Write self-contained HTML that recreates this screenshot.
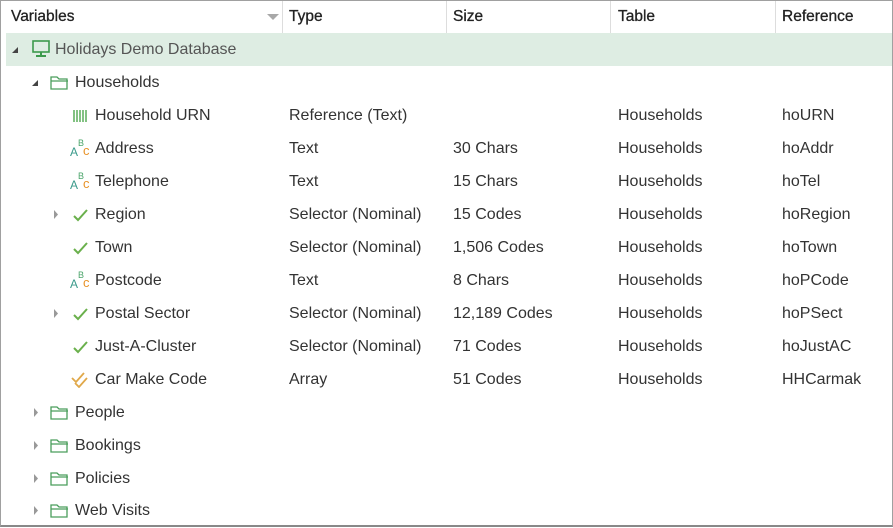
<!DOCTYPE html>
<html><head><style>
body{margin:0;width:893px;height:526px;overflow:hidden;background:#fff;font-family:"Liberation Sans",sans-serif;}
.wrap{position:absolute;left:0;top:0;width:891px;height:524px;border:1px solid #a0a0a0;border-bottom:2px solid #888;}
.hdr{position:absolute;top:0;height:32px;font-size:15.5px;color:#222;line-height:31px;-webkit-text-stroke:0.3px #222;}
.sep{position:absolute;top:0;height:32px;width:1px;background:#ddd;}
.row{position:absolute;left:0;width:891px;height:33px;font-size:16px;color:#333;line-height:34px;}
.row span{position:absolute;white-space:nowrap;}
.hl{background:#deede3;left:5px;width:886px;}
.ic{position:absolute;}
</style></head><body><div class="wrap">
<div class="hdr" style="left:10px">Variables</div>
<div style="position:absolute;left:266px;top:13px;border-left:6px solid transparent;border-right:6px solid transparent;border-top:6px solid #a8a8a8"></div>
<div class="sep" style="left:281px"></div><div class="hdr" style="left:288px">Type</div>
<div class="sep" style="left:445px"></div><div class="hdr" style="left:452px">Size</div>
<div class="sep" style="left:609px"></div><div class="hdr" style="left:617px">Table</div>
<div class="sep" style="left:774px"></div><div class="hdr" style="left:781px">Reference</div>

<div class="row hl" style="top:32px;"></div>
<div class="row" style="top:32px;">
<svg class="ic" style="left:11px;top:13px" width="8" height="8"><path d="M6 1V7H0Z" fill="#444"/></svg>
<svg class="ic" style="left:30px;top:7px" width="20" height="18"><rect x="2" y="1" width="16" height="11" fill="none" stroke="#3c9a4c" stroke-width="1.6"/><path d="M10 12v3M5 16h10" stroke="#3c9a4c" stroke-width="2"/></svg>
<span style="left:54px;color:#555">Holidays Demo Database</span></div>

<div class="row" style="top:65px">
<svg class="ic" style="left:31px;top:13px" width="8" height="8"><path d="M6 1V7H0Z" fill="#444"/></svg>
<svg class="ic" style="left:49px;top:9px" width="20" height="15"><path d="M1 2h6l2 2h8v10H1Z M1 6h17" fill="none" stroke="#4a9e5c" stroke-width="1.3"/></svg>
<span style="left:74px">Households</span></div>

<div class="row" style="top:98px">
<svg class="ic" style="left:72px;top:11px" width="16" height="12"><path d="M1 0v12M4 0v12M7 0v12M10 0v12M13 0v12" stroke="#5aae5a" stroke-width="1.5"/></svg>
<span style="left:94px">Household URN</span><span style="left:288px">Reference (Text)</span><span style="left:617px">Households</span><span style="left:781px">hoURN</span></div>

<div class="row" style="top:131px"><span style="left:69px;font-size:12px;color:#3a9a8a;line-height:40px">A</span><span style="left:77px;font-size:9px;color:#4aa46a;line-height:22px">B</span><span style="left:82px;font-size:13px;color:#e8932a;line-height:38px">c</span>
<span style="left:94px">Address</span><span style="left:288px">Text</span><span style="left:452px">30 Chars</span><span style="left:617px">Households</span><span style="left:781px">hoAddr</span></div>

<div class="row" style="top:164px"><span style="left:69px;font-size:12px;color:#3a9a8a;line-height:40px">A</span><span style="left:77px;font-size:9px;color:#4aa46a;line-height:22px">B</span><span style="left:82px;font-size:13px;color:#e8932a;line-height:38px">c</span>
<span style="left:94px">Telephone</span><span style="left:288px">Text</span><span style="left:452px">15 Chars</span><span style="left:617px">Households</span><span style="left:781px">hoTel</span></div>

<div class="row" style="top:197px">
<svg class="ic" style="left:52px;top:12px" width="6" height="9"><path d="M1 0L5 4.5L1 9Z" fill="#999"/></svg>
<svg class="ic" style="left:72px;top:10px" width="16" height="14"><path d="M1 8l4 4 9-10" fill="none" stroke="#6ab04c" stroke-width="2"/></svg>
<span style="left:94px">Region</span><span style="left:288px">Selector (Nominal)</span><span style="left:452px">15 Codes</span><span style="left:617px">Households</span><span style="left:781px">hoRegion</span></div>

<div class="row" style="top:230px">
<svg class="ic" style="left:72px;top:10px" width="16" height="14"><path d="M1 8l4 4 9-10" fill="none" stroke="#6ab04c" stroke-width="2"/></svg>
<span style="left:94px">Town</span><span style="left:288px">Selector (Nominal)</span><span style="left:452px">1,506 Codes</span><span style="left:617px">Households</span><span style="left:781px">hoTown</span></div>

<div class="row" style="top:263px"><span style="left:69px;font-size:12px;color:#3a9a8a;line-height:40px">A</span><span style="left:77px;font-size:9px;color:#4aa46a;line-height:22px">B</span><span style="left:82px;font-size:13px;color:#e8932a;line-height:38px">c</span>
<span style="left:94px">Postcode</span><span style="left:288px">Text</span><span style="left:452px">8 Chars</span><span style="left:617px">Households</span><span style="left:781px">hoPCode</span></div>

<div class="row" style="top:296px">
<svg class="ic" style="left:52px;top:12px" width="6" height="9"><path d="M1 0L5 4.5L1 9Z" fill="#999"/></svg>
<svg class="ic" style="left:72px;top:10px" width="16" height="14"><path d="M1 8l4 4 9-10" fill="none" stroke="#6ab04c" stroke-width="2"/></svg>
<span style="left:94px">Postal Sector</span><span style="left:288px">Selector (Nominal)</span><span style="left:452px">12,189 Codes</span><span style="left:617px">Households</span><span style="left:781px">hoPSect</span></div>

<div class="row" style="top:329px">
<svg class="ic" style="left:72px;top:10px" width="16" height="14"><path d="M1 8l4 4 9-10" fill="none" stroke="#6ab04c" stroke-width="2"/></svg>
<span style="left:94px">Just-A-Cluster</span><span style="left:288px">Selector (Nominal)</span><span style="left:452px">71 Codes</span><span style="left:617px">Households</span><span style="left:781px">hoJustAC</span></div>

<div class="row" style="top:362px">
<svg class="ic" style="left:70px;top:9px" width="18" height="16"><path d="M1 6l4 4 8-9" fill="none" stroke="#e0a84a" stroke-width="1.8"/><path d="M4 11l4 4 8-9" fill="none" stroke="#e0a84a" stroke-width="1.8"/></svg>
<span style="left:94px">Car Make Code</span><span style="left:288px">Array</span><span style="left:452px">51 Codes</span><span style="left:617px">Households</span><span style="left:781px">HHCarmak</span></div>

<div class="row" style="top:395px"><svg class="ic" style="left:32px;top:12px" width="6" height="9"><path d="M1 0L5 4.5L1 9Z" fill="#999"/></svg><svg class="ic" style="left:49px;top:9px" width="20" height="15"><path d="M1 2h6l2 2h8v10H1Z M1 6h17" fill="none" stroke="#4a9e5c" stroke-width="1.3"/></svg><span style="left:74px">People</span></div>
<div class="row" style="top:428px"><svg class="ic" style="left:32px;top:12px" width="6" height="9"><path d="M1 0L5 4.5L1 9Z" fill="#999"/></svg><svg class="ic" style="left:49px;top:9px" width="20" height="15"><path d="M1 2h6l2 2h8v10H1Z M1 6h17" fill="none" stroke="#4a9e5c" stroke-width="1.3"/></svg><span style="left:74px">Bookings</span></div>
<div class="row" style="top:461px"><svg class="ic" style="left:32px;top:12px" width="6" height="9"><path d="M1 0L5 4.5L1 9Z" fill="#999"/></svg><svg class="ic" style="left:49px;top:9px" width="20" height="15"><path d="M1 2h6l2 2h8v10H1Z M1 6h17" fill="none" stroke="#4a9e5c" stroke-width="1.3"/></svg><span style="left:74px">Policies</span></div>
<div class="row" style="top:493px"><svg class="ic" style="left:32px;top:12px" width="6" height="9"><path d="M1 0L5 4.5L1 9Z" fill="#999"/></svg><svg class="ic" style="left:49px;top:9px" width="20" height="15"><path d="M1 2h6l2 2h8v10H1Z M1 6h17" fill="none" stroke="#4a9e5c" stroke-width="1.3"/></svg><span style="left:74px">Web Visits</span></div>
</div></body></html>
